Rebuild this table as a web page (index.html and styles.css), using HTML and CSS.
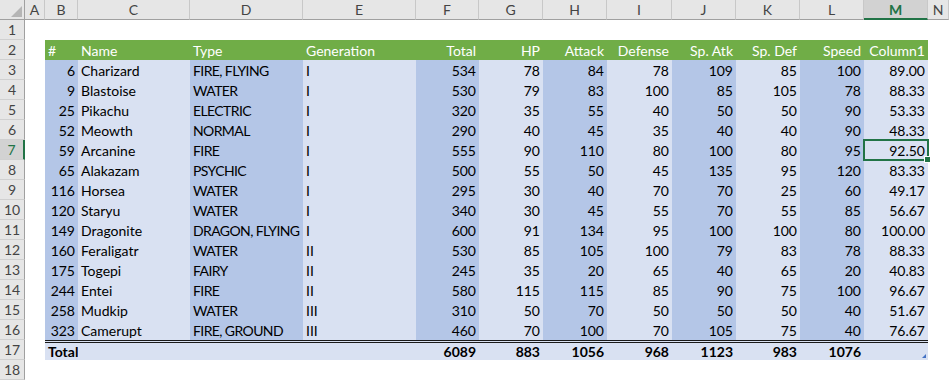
FILE: index.html
```html
<!DOCTYPE html>
<html>
<head>
<meta charset="utf-8">
<link rel="stylesheet" href="styles.css">
</head>
<body>
<div class="sheet">
  <div class="row colhead">
    <div class="corner"><span class="tri"></span></div>
    <div class="ch">A</div><div class="ch">B</div><div class="ch">C</div><div class="ch">D</div><div class="ch">E</div><div class="ch">F</div><div class="ch">G</div><div class="ch">H</div><div class="ch">I</div><div class="ch">J</div><div class="ch">K</div><div class="ch">L</div><div class="ch active">M</div><div class="ch">N</div>
  </div>
  <div class="row"><div class="rh">1</div></div>
  <div class="row head">
    <div class="rh">2</div><div class="c"></div>
    <div class="t">#</div><div class="t">Name</div><div class="t">Type</div><div class="t">Generation</div><div class="t r">Total</div><div class="t r">HP</div><div class="t r">Attack</div><div class="t r">Defense</div><div class="t r">Sp. Atk</div><div class="t r">Sp. Def</div><div class="t r">Speed</div><div class="t r">Column1</div>
  </div>
  <div class="row data"><div class="rh">3</div><div class="c"></div><div class="d r">6</div><div class="l">Charizard</div><div class="d caps">FIRE, FLYING</div><div class="l">I</div><div class="d r">534</div><div class="l r">78</div><div class="d r">84</div><div class="l r">78</div><div class="d r">109</div><div class="l r">85</div><div class="d r">100</div><div class="l r">89.00</div></div>
  <div class="row data"><div class="rh">4</div><div class="c"></div><div class="d r">9</div><div class="l">Blastoise</div><div class="d caps">WATER</div><div class="l">I</div><div class="d r">530</div><div class="l r">79</div><div class="d r">83</div><div class="l r">100</div><div class="d r">85</div><div class="l r">105</div><div class="d r">78</div><div class="l r">88.33</div></div>
  <div class="row data"><div class="rh">5</div><div class="c"></div><div class="d r">25</div><div class="l">Pikachu</div><div class="d caps">ELECTRIC</div><div class="l">I</div><div class="d r">320</div><div class="l r">35</div><div class="d r">55</div><div class="l r">40</div><div class="d r">50</div><div class="l r">50</div><div class="d r">90</div><div class="l r">53.33</div></div>
  <div class="row data"><div class="rh">6</div><div class="c"></div><div class="d r">52</div><div class="l">Meowth</div><div class="d caps">NORMAL</div><div class="l">I</div><div class="d r">290</div><div class="l r">40</div><div class="d r">45</div><div class="l r">35</div><div class="d r">40</div><div class="l r">40</div><div class="d r">90</div><div class="l r">48.33</div></div>
  <div class="row data"><div class="rh sel">7</div><div class="c"></div><div class="d r">59</div><div class="l">Arcanine</div><div class="d caps">FIRE</div><div class="l">I</div><div class="d r">555</div><div class="l r">90</div><div class="d r">110</div><div class="l r">80</div><div class="d r">100</div><div class="l r">80</div><div class="d r">95</div><div class="l r active-cell">92.50<span class="handle"></span></div></div>
  <div class="row data"><div class="rh">8</div><div class="c"></div><div class="d r">65</div><div class="l">Alakazam</div><div class="d caps">PSYCHIC</div><div class="l">I</div><div class="d r">500</div><div class="l r">55</div><div class="d r">50</div><div class="l r">45</div><div class="d r">135</div><div class="l r">95</div><div class="d r">120</div><div class="l r">83.33</div></div>
  <div class="row data"><div class="rh">9</div><div class="c"></div><div class="d r">116</div><div class="l">Horsea</div><div class="d caps">WATER</div><div class="l">I</div><div class="d r">295</div><div class="l r">30</div><div class="d r">40</div><div class="l r">70</div><div class="d r">70</div><div class="l r">25</div><div class="d r">60</div><div class="l r">49.17</div></div>
  <div class="row data"><div class="rh">10</div><div class="c"></div><div class="d r">120</div><div class="l">Staryu</div><div class="d caps">WATER</div><div class="l">I</div><div class="d r">340</div><div class="l r">30</div><div class="d r">45</div><div class="l r">55</div><div class="d r">70</div><div class="l r">55</div><div class="d r">85</div><div class="l r">56.67</div></div>
  <div class="row data"><div class="rh">11</div><div class="c"></div><div class="d r">149</div><div class="l">Dragonite</div><div class="d caps">DRAGON, FLYING</div><div class="l">I</div><div class="d r">600</div><div class="l r">91</div><div class="d r">134</div><div class="l r">95</div><div class="d r">100</div><div class="l r">100</div><div class="d r">80</div><div class="l r">100.00</div></div>
  <div class="row data"><div class="rh">12</div><div class="c"></div><div class="d r">160</div><div class="l">Feraligatr</div><div class="d caps">WATER</div><div class="l">II</div><div class="d r">530</div><div class="l r">85</div><div class="d r">105</div><div class="l r">100</div><div class="d r">79</div><div class="l r">83</div><div class="d r">78</div><div class="l r">88.33</div></div>
  <div class="row data"><div class="rh">13</div><div class="c"></div><div class="d r">175</div><div class="l">Togepi</div><div class="d caps">FAIRY</div><div class="l">II</div><div class="d r">245</div><div class="l r">35</div><div class="d r">20</div><div class="l r">65</div><div class="d r">40</div><div class="l r">65</div><div class="d r">20</div><div class="l r">40.83</div></div>
  <div class="row data"><div class="rh">14</div><div class="c"></div><div class="d r">244</div><div class="l">Entei</div><div class="d caps">FIRE</div><div class="l">II</div><div class="d r">580</div><div class="l r">115</div><div class="d r">115</div><div class="l r">85</div><div class="d r">90</div><div class="l r">75</div><div class="d r">100</div><div class="l r">96.67</div></div>
  <div class="row data"><div class="rh">15</div><div class="c"></div><div class="d r">258</div><div class="l">Mudkip</div><div class="d caps">WATER</div><div class="l">III</div><div class="d r">310</div><div class="l r">50</div><div class="d r">70</div><div class="l r">50</div><div class="d r">50</div><div class="l r">50</div><div class="d r">40</div><div class="l r">51.67</div></div>
  <div class="row data"><div class="rh">16</div><div class="c"></div><div class="d r">323</div><div class="l">Camerupt</div><div class="d caps">FIRE, GROUND</div><div class="l">III</div><div class="d r">460</div><div class="l r">70</div><div class="d r">100</div><div class="l r">70</div><div class="d r">105</div><div class="l r">75</div><div class="d r">40</div><div class="l r">76.67</div></div>
  <div class="row total"><div class="rh">17</div><div class="c"></div><div class="tt b">Total</div><div class="tt"></div><div class="tt"></div><div class="tt"></div><div class="tt r b">6089</div><div class="tt r b">883</div><div class="tt r b">1056</div><div class="tt r b">968</div><div class="tt r b">1123</div><div class="tt r b">983</div><div class="tt r b">1076</div><div class="tt last"><span class="resize"></span></div></div>
  <div class="row"><div class="rh">18</div></div>
</div>
</body>
</html>
```
FILE: styles.css
```css
html, body {
  margin: 0;
  padding: 0;
  background: #ffffff;
}
body {
  font-family: Lato, "Open Sans", sans-serif;
  font-size: 14px;
  color: #000;
  overflow: hidden;
}
.sheet {
  width: 949px;
  height: 381px;
  overflow: hidden;
}
.row {
  display: grid;
  grid-template-columns: 25px 20px 33px 112px 113px 113px 63px 64px 64px 65px 64px 64px 64px 64px 21px;
  height: 20px;
  line-height: 22px;
}
.row > div {
  box-sizing: border-box;
  height: 20px;
  white-space: nowrap;
  overflow: hidden;
}
.colhead > div {
  background: #e6e6e6;
  border-right: 1px solid #c8c8c8;
  border-bottom: 1px solid #a0a0a0;
  text-align: center;
  color: #444;
  line-height: 20px;
}
.corner {
  position: relative;
  border-right: 1px solid #a0a0a0 !important;
}
.corner .tri {
  position: absolute;
  right: 2px;
  bottom: 2px;
  width: 0;
  height: 0;
  border-left: 11px solid transparent;
  border-bottom: 11px solid #b5b5b5;
}
.colhead .ch.active {
  background: #d2d2d2;
  color: #217346;
  font-weight: bold;
  border-bottom: 2px solid #217346;
}
.rh {
  background: #e6e6e6;
  border-right: 1px solid #a0a0a0;
  border-bottom: 1px solid #d0d0d0;
  text-align: center;
  color: #444;
  line-height: 20px;
}
.rh.sel {
  background: #d2d2d2;
  color: #217346;
  border-right: 2px solid #217346;
}
.t, .d, .l, .tt {
  padding: 0 3px;
}
.t {
  background: #70ad47;
  color: #ffffff;
}
.d {
  background: #b4c6e7;
}
.l {
  background: #d9e1f2;
}
.caps {
  letter-spacing: -0.6px;
}
.tt {
  background: #d9e1f2;
  border-top: 3px double #1a1a1a;
  line-height: 18px;
}
.r {
  text-align: right;
}
.b {
  font-weight: bold;
}
.active-cell {
  position: relative;
  overflow: visible !important;
}
.active-cell::after {
  content: "";
  position: absolute;
  left: -1px;
  top: -1px;
  right: -1px;
  bottom: -1px;
  border: 2px solid #217346;
}
.active-cell .handle {
  position: absolute;
  right: -3px;
  bottom: -3px;
  width: 5px;
  height: 5px;
  background: #217346;
  border: 1px solid #fff;
  z-index: 2;
}
.last {
  position: relative;
}
.last .resize {
  position: absolute;
  right: 2px;
  bottom: 2px;
  width: 0;
  height: 0;
  border-left: 4px solid transparent;
  border-bottom: 4px solid #4472c4;
}
```
